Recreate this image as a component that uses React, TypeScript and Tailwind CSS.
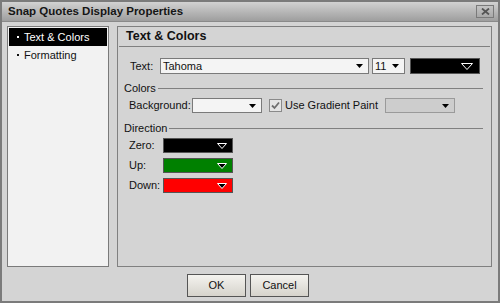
import React from "react";

function SmallArrow() {
  return (
    <svg width="7" height="4" viewBox="0 0 7 4" className="block">
      <path d="M0 0H7L3.5 4Z" fill="#000" />
    </svg>
  );
}

function ColorArrow({ w = 10, h = 6 }: { w?: number; h?: number }) {
  return (
    <svg width={w} height={h} viewBox={`0 0 ${w} ${h}`} className="block">
      <path d={`M0.5 0.5H${w - 0.5}L${w / 2} ${h - 0.5}Z`} fill="#000" stroke="#fff" strokeWidth="1" />
    </svg>
  );
}

function Combo({ className, value }: { className: string; value?: string }) {
  return (
    <div className={`flex items-center justify-between border border-[#7a7a7a] pl-[2px] pr-[5px] ${className}`}>
      <span className="leading-none">{value}</span>
      <SmallArrow />
    </div>
  );
}

function ColorCombo({ className, big }: { className: string; big?: boolean }) {
  return (
    <div className={`flex items-center justify-end border border-[#555555] ${big ? "pr-[6px]" : "pr-[5px]"} ${className}`}>
      {big ? <ColorArrow w={12} h={7} /> : <ColorArrow w={10} h={6} />}
    </div>
  );
}

function SectionTitle({ title, className }: { title: string; className: string }) {
  return (
    <div className={`h-[14px] flex items-center pl-[6px] pr-[8px] ${className}`}>
      <span className="leading-none">{title}</span>
      <div className="flex-1 h-px bg-[#808080] ml-[2px]" />
    </div>
  );
}

export default function App() {
  return (
    <div className="w-[500px] h-[303px] flex flex-col bg-[#d4d4d4] border-2 border-[#7b7b7b] text-[11px] text-[#111] font-['Liberation_Sans',Arial,sans-serif]">
      {/* Title bar */}
      <div className="h-[20px] shrink-0 flex items-center justify-between pl-[6px] pr-[4px] bg-gradient-to-b from-[#d2d2d2] to-[#9e9e9e] border-b border-[#8a8a8a]">
        <span className="font-bold text-[11.5px] text-[#151515] leading-none">Snap Quotes Display Properties</span>
        <div className="w-[18px] h-[13px] border border-[#7a7a7a] bg-gradient-to-b from-[#c4c4c4] to-[#a8a8a8] flex items-center justify-center">
          <svg width="9" height="7" viewBox="0 0 9 7" className="block">
            <path d="M1 0.5L8 6.5M8 0.5L1 6.5" stroke="#555" strokeWidth="1.8" />
          </svg>
        </div>
      </div>

      {/* Body */}
      <div className="flex flex-1 min-h-0 pt-[4px] pl-[5px] pr-[6px] gap-[8px]">
        {/* Left list */}
        <div className="w-[102px] shrink-0 border border-[#7a7a7a] bg-[#f2f2f2] p-px">
          <div className="h-[18px] bg-black text-white flex items-center pl-[8px]">
            <span className="w-[2px] h-[2px] bg-white mr-[5px]" />
            <span className="leading-none">Text &amp; Colors</span>
          </div>
          <div className="h-[18px] flex items-center pl-[8px]">
            <span className="w-[2px] h-[2px] bg-[#111] mr-[5px]" />
            <span className="leading-none">Formatting</span>
          </div>
        </div>

        {/* Right panel */}
        <div className="flex-1 border border-[#808080] flex flex-col">
          <div className="h-[20px] mx-px border-b border-[#808080] flex items-center pl-[7px]">
            <span className="font-bold text-[12.5px] leading-none">Text &amp; Colors</span>
          </div>

          {/* Text row */}
          <div className="mt-[11px] h-[16px] flex items-stretch pl-[12px]">
            <span className="w-[30px] flex items-center">Text:</span>
            <Combo className="w-[209px] bg-[#f4f4f4]" value="Tahoma" />
            <Combo className="w-[33px] ml-[3px] bg-[#f4f4f4]" value="11" />
            <ColorCombo className="w-[70px] ml-[5px] bg-black" big />
          </div>

          <SectionTitle title="Colors" className="mt-[7px]" />

          {/* Background row */}
          <div className="mt-[3px] h-[15px] flex items-stretch pl-[11px]">
            <span className="w-[63px] flex items-center">Background:</span>
            <Combo className="w-[70px] bg-[#f4f4f4]" />
            <div className="ml-[7px] self-center w-[13px] h-[13px] border border-[#8a8a8a] bg-[#e4e4e4] flex items-center justify-center">
              <svg width="9" height="9" viewBox="0 0 9 9" className="block">
                <path d="M1 4.5L3.5 7L8 1.5" stroke="#6e6e6e" strokeWidth="1.8" fill="none" />
              </svg>
            </div>
            <span className="ml-[3px] w-[100px] flex items-center whitespace-nowrap">Use Gradient Paint</span>
            <Combo className="w-[70px] bg-[#cdcdcd] border-[#9a9a9a]" />
          </div>

          <SectionTitle title="Direction" className="mt-[8px]" />

          <div className="mt-[3px] h-[15px] flex items-stretch pl-[11px]">
            <span className="w-[34px] flex items-center">Zero:</span>
            <ColorCombo className="w-[70px] bg-black" />
          </div>
          <div className="mt-[5px] h-[15px] flex items-stretch pl-[11px]">
            <span className="w-[34px] flex items-center">Up:</span>
            <ColorCombo className="w-[70px] bg-[#008000]" />
          </div>
          <div className="mt-[5px] h-[15px] flex items-stretch pl-[11px]">
            <span className="w-[34px] flex items-center">Down:</span>
            <ColorCombo className="w-[70px] bg-[#ff0000]" />
          </div>
        </div>
      </div>

      {/* Footer */}
      <div className="shrink-0 flex justify-center gap-[4px] pt-[7px] pb-[4px] pr-[4px]">
        <button className="w-[59px] h-[23px] border border-[#555] bg-gradient-to-b from-[#f4f3ef] to-[#d6d3cc] text-[11px] text-[#111]">OK</button>
        <button className="w-[59px] h-[23px] border border-[#555] bg-gradient-to-b from-[#f4f3ef] to-[#d6d3cc] text-[11px] text-[#111]">Cancel</button>
      </div>
    </div>
  );
}
